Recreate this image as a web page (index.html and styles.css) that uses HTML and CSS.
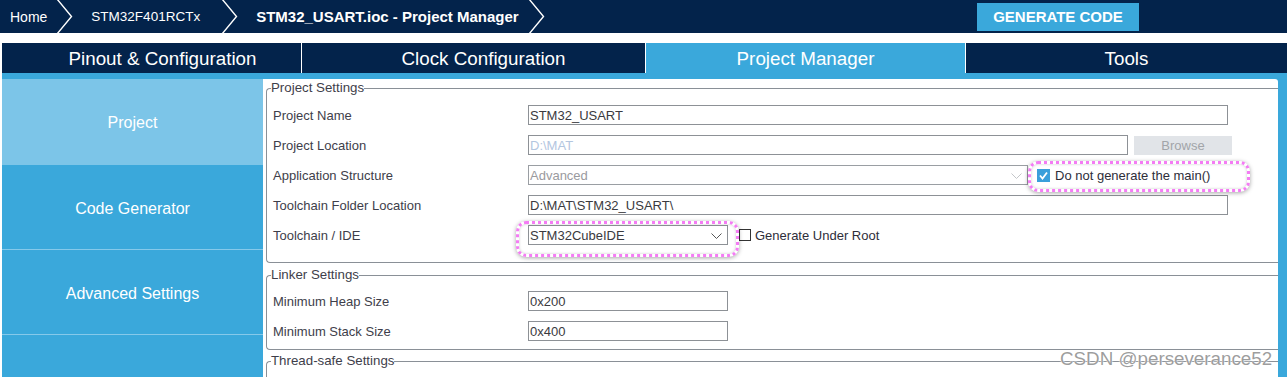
FILE: index.html
```html
<!DOCTYPE html>
<html>
<head>
<meta charset="utf-8">
<title>STM32_USART.ioc - Project Manager</title>
<link rel="stylesheet" href="styles.css">
</head>
<body>
<div class="app">
  <header class="topbar">
    <span class="crumb crumb-home">Home</span>
    <svg class="chev" width="17" height="33" viewBox="0 0 17 33"><polyline points="1,-1 15.5,16.5 1,34" fill="none" stroke="#fff" stroke-width="1.4"/></svg>
    <span class="crumb crumb-mcu">STM32F401RCTx</span>
    <svg class="chev chev-mid" width="17" height="33" viewBox="0 0 17 33"><polyline points="1,-1 15.5,16.5 1,34" fill="none" stroke="#fff" stroke-width="1.4"/></svg>
    <span class="crumb crumb-bold">STM32_USART.ioc - Project Manager</span>
    <svg class="chev chev-last" width="17" height="33" viewBox="0 0 17 33"><polyline points="1,-1 15.5,16.5 1,34" fill="none" stroke="#fff" stroke-width="1.4"/></svg>
    <button class="gen-btn">GENERATE CODE</button>
  </header>

  <nav class="tabs">
    <div class="tab tab-pinout">Pinout &amp; Configuration</div>
    <div class="tab tab-clock">Clock Configuration</div>
    <div class="tab tab-pm active">Project Manager</div>
    <div class="tab tab-tools">Tools</div>
  </nav>

  <div class="main">
    <aside class="sidebar">
      <div class="nav-item selected">Project</div>
      <div class="nav-item">Code Generator</div>
      <div class="nav-item">Advanced Settings</div>
      <div class="nav-item"></div>
    </aside>

    <section class="content">
      <fieldset class="group group-project">
        <legend>Project Settings</legend>
        <div class="row">
          <label>Project Name</label>
          <div class="ctrl"><div class="field w700">STM32_USART</div></div>
        </div>
        <div class="row">
          <label>Project Location</label>
          <div class="ctrl"><div class="field w600 muted-blue">D:\MAT</div><div class="browse">Browse</div></div>
        </div>
        <div class="row">
          <label>Application Structure</label>
          <div class="ctrl">
            <div class="field select w500 disabled">Advanced
              <svg class="caret" width="11" height="6" viewBox="0 0 11 6"><polyline points="0.5,0.5 5.5,5.5 10.5,0.5" fill="none" stroke="#c4c6c9" stroke-width="1"/></svg>
            </div>
            <div class="check-wrap cw-main"><span class="cbox checked"><svg width="13" height="13" viewBox="0 0 13 13"><polyline points="3,6.5 5.5,9.5 10,3.5" fill="none" stroke="#fff" stroke-width="1.8"/></svg></span><span class="check-label">Do not generate the main()</span></div>
          </div>
        </div>
        <div class="row">
          <label>Toolchain Folder Location</label>
          <div class="ctrl"><div class="field w700">D:\MAT\STM32_USART\</div></div>
        </div>
        <div class="row">
          <label>Toolchain / IDE</label>
          <div class="ctrl">
            <div class="field select w200">STM32CubeIDE
              <svg class="caret" width="11" height="6" viewBox="0 0 11 6"><polyline points="0.5,0.5 5.5,5.5 10.5,0.5" fill="none" stroke="#555" stroke-width="1"/></svg>
            </div>
            <div class="check-wrap cw-root"><span class="cbox"></span><span class="check-label">Generate Under Root</span></div>
          </div>
        </div>
      </fieldset>

      <fieldset class="group group-linker">
        <legend>Linker Settings</legend>
        <div class="row">
          <label>Minimum Heap Size</label>
          <div class="ctrl"><div class="field w200">0x200</div></div>
        </div>
        <div class="row">
          <label>Minimum Stack Size</label>
          <div class="ctrl"><div class="field w200">0x400</div></div>
        </div>
      </fieldset>

      <fieldset class="group group-thread">
        <legend>Thread-safe Settings</legend>
      </fieldset>
    </section>
  </div>

  <div class="mark mark-main"></div>
  <div class="mark mark-ide"></div>
  <div class="watermark">CSDN @perseverance52</div>
</div>
</body>
</html>
```

FILE: styles.css
```css
* { box-sizing: border-box; }
html, body { margin: 0; padding: 0; background: #fff; }
body { font-family: "Liberation Sans", Arial, sans-serif; overflow: hidden; }

.app { position: relative; width: 1287px; height: 377px; overflow: hidden; }

/* top breadcrumb bar */
.topbar {
  height: 33px;
  background: #03234b;
  display: flex;
  align-items: center;
  color: #fff;
  font-size: 14px;
  padding-left: 10px;
}
.crumb { white-space: nowrap; }
.crumb-mcu { font-size: 13.5px; }
.crumb-bold { font-weight: bold; font-size: 15px; }
.chev { display: block; flex: none; margin: 0 18px 0 9px; }
.chev-mid { margin-left: 21px; }
.chev-last { margin-right: 0; }
.gen-btn {
  margin-left: auto;
  margin-right: 148px;
  width: 162px;
  height: 28px;
  border: 0;
  background: #3aa8db;
  color: #fff;
  font-family: "Liberation Sans", Arial, sans-serif;
  font-weight: bold;
  font-size: 15px;
  padding: 0;
}

/* main tabs */
.tabs {
  margin-top: 10px;
  margin-left: 2px;
  height: 30px;
  display: flex;
  background: #03234b;
}
.tab {
  height: 30px;
  display: flex;
  align-items: center;
  justify-content: center;
  color: #fff;
  font-size: 18.8px;
  padding-top: 1px;
  border-left: 1px solid #fff;
}
.tab-pinout { width: 299px; border-left: 0; padding-left: 22px; }
.tab-clock { width: 344px; padding-left: 20px; }
.tab-pm { width: 320px; }
.tab-tools { flex: 1; }
.tab.active { background: #3aa8db; }

/* body area */
.main {
  margin-left: 2px;
  height: 304px;
  padding-top: 6px;
  background: #3aa8db;
  display: flex;
}
.sidebar { width: 261px; flex: none; }
.nav-item {
  height: 85px;
  border-bottom: 1px solid #86c9ea;
  display: flex;
  align-items: center;
  justify-content: center;
  color: #fff;
  font-size: 16px;
  padding-top: 4px;
}
.nav-item.selected { background: #7cc5e8; height: 86px; border-bottom: 0; padding-top: 2px; }

.content {
  flex: 1;
  background: #fff;
  margin-right: 9px;
  padding-left: 3px;
  overflow: hidden;
  border-top-right-radius: 3px;
}

.group {
  margin: 0;
  min-width: 0;
  border: 1px solid #8a9097;
  border-right: 0;
  border-radius: 4px 0 0 4px;
  padding: 0 0 0 4px;
  color: #3e3e4a;
  font-size: 13px;
}
.group legend {
  padding: 0;
  font-size: 13.3px;
  line-height: 16px;
  color: #3e3e4a;
}
.group-project { margin-top: 1px; padding-bottom: 12px; }
.group-linker { margin-top: 4px; padding-bottom: 3px; }
.group-thread { margin-top: 3px; height: 40px; }

.row {
  display: grid;
  grid-template-columns: 255px 1fr;
  align-items: center;
  height: 30px;
  padding-left: 2px;
}
.group .row:first-of-type { margin-top: 4px; }
.group-linker .row:first-of-type { margin-top: 3px; }
.row label { white-space: nowrap; }
.ctrl { display: flex; align-items: center; }

.field {
  height: 20px;
  border: 1px solid #8d9196;
  padding: 0 1px;
  display: flex;
  align-items: center;
  font-size: 13px;
  color: #3a3a40;
  white-space: nowrap;
  position: relative;
}
.w700 { width: 700px; }
.w600 { width: 600px; }
.w500 { width: 500px; }
.w200 { width: 200px; }
.muted-blue { color: #b3c6df; }
.field.disabled { color: #9a9a9e; border-color: #9a9ea3; }
.caret { position: absolute; right: 5px; top: 7px; }

.browse {
  margin-left: 6px;
  width: 98px;
  height: 19px;
  background: #e1e4e8;
  color: #a2a5a9;
  display: flex;
  align-items: center;
  justify-content: center;
  font-size: 13px;
}

.check-wrap { display: flex; align-items: center; font-size: 13px; color: #2e2e3a; }
.cw-main { margin-left: 9px; }
.cw-root { margin-left: 11px; }
.cbox {
  width: 12px;
  height: 12px;
  border: 1px solid #333;
  background: #fff;
  display: block;
  flex: none;
  margin-right: 4px;
}
.cbox.checked {
  width: 13px;
  height: 13px;
  border: 0;
  background: #3a9fdb;
  margin-right: 5px;
}
.cbox svg { display: block; }

/* annotation overlays */
.mark {
  position: absolute;
  border: 3px dotted #f47cf4;
  border-radius: 10px;
  box-shadow: 0 1px 4px rgba(0, 0, 0, 0.35), inset 0 0 3px rgba(0, 0, 0, 0.2);
  pointer-events: none;
}
.mark-main { left: 1028px; top: 161px; width: 222px; height: 31px; }
.mark-ide { left: 516px; top: 221px; width: 223px; height: 36px; }

.watermark {
  position: absolute;
  left: 1060px;
  top: 348px;
  font-size: 18.8px;
  color: rgba(140, 140, 140, 0.85);
  text-shadow: 0 0 1px #fff, 0 0 2px #fff;
  white-space: nowrap;
}
```
